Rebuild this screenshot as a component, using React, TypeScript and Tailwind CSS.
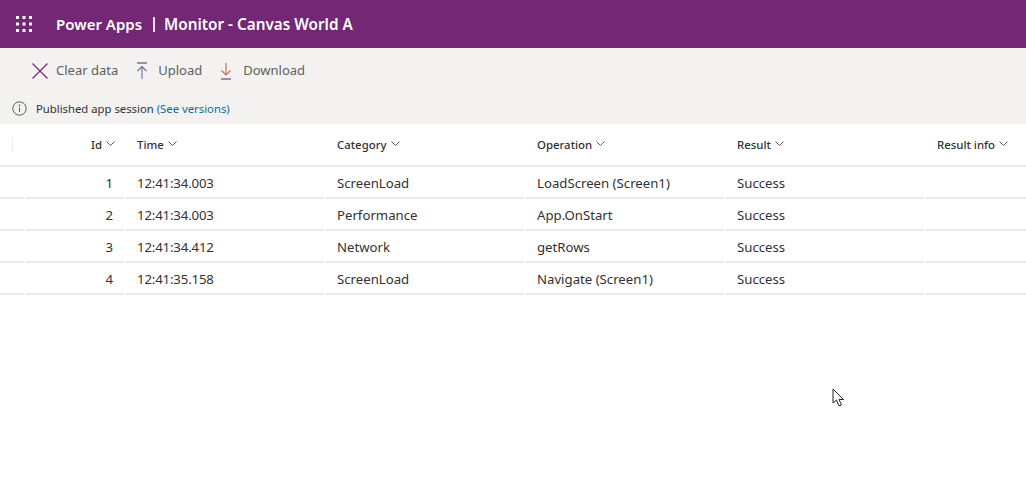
const FONT = "font-['Noto_Sans','Open_Sans',sans-serif]";

const COLUMNS = ['Time', 'Category', 'Operation', 'Result', 'Result info'];

const ROWS = [
  { id: 1, time: '12:41:34.003', category: 'ScreenLoad', operation: 'LoadScreen (Screen1)', result: 'Success' },
  { id: 2, time: '12:41:34.003', category: 'Performance', operation: 'App.OnStart', result: 'Success' },
  { id: 3, time: '12:41:34.412', category: 'Network', operation: 'getRows', result: 'Success' },
  { id: 4, time: '12:41:35.158', category: 'ScreenLoad', operation: 'Navigate (Screen1)', result: 'Success' },
];

function WaffleIcon() {
  const dots = [];
  for (let y = 0; y < 3; y++) {
    for (let x = 0; x < 3; x++) {
      dots.push(<rect key={`${x}-${y}`} x={x * 6.5} y={y * 6.5} width="3" height="3" fill="#fff" />);
    }
  }
  return (
    <svg width="16" height="16" viewBox="0 0 16 16">
      {dots}
    </svg>
  );
}

function ClearIcon() {
  return (
    <svg width="16" height="16" viewBox="0 0 16 16" fill="none" stroke="#742774" strokeWidth="1.2">
      <path d="M0.5 0.5 L15.5 15.5 M15.5 0.5 L0.5 15.5" />
    </svg>
  );
}

function UploadIcon() {
  return (
    <svg width="14" height="18" viewBox="0 0 14 18" fill="none" strokeWidth="1.1">
      <path d="M2 1 H12" stroke="#742774" />
      <path d="M7 17 V4.5 M2.5 9 L7 4.5 L11.5 9" stroke="#6f6fa8" />
    </svg>
  );
}

function DownloadIcon() {
  return (
    <svg width="14" height="18" viewBox="0 0 14 18" fill="none" strokeWidth="1.1">
      <path d="M7 1 V13 M2.5 8.5 L7 13 L11.5 8.5" stroke="#c0705a" />
      <path d="M2 17 H12" stroke="#742774" />
    </svg>
  );
}

function InfoIcon() {
  return (
    <svg width="15" height="15" viewBox="0 0 15 15" fill="none" stroke="#605e5c">
      <circle cx="7.5" cy="7.5" r="6.7" />
      <path d="M7.5 6.5 V11" />
      <circle cx="7.5" cy="4.3" r="0.5" fill="#605e5c" />
    </svg>
  );
}

function CursorIcon() {
  return (
    <svg width="13" height="20" viewBox="0 0 13 20" fill="#fff" stroke="#222" strokeWidth="1">
      <path d="M1 1 V15 L4.5 12 L7 18 L9.5 17 L7 11.5 H11.5 Z" />
    </svg>
  );
}

function Chevron() {
  return (
    <svg width="9" height="5" viewBox="0 0 9 5" fill="none" stroke="#605e5c" strokeWidth="1" className="mb-[2px]">
      <path d="M0.5 0.5 L4.5 4.5 L8.5 0.5" />
    </svg>
  );
}

function ToolbarButton({ icon, label, className }: { icon: React.ReactNode; label: string; className: string }) {
  return (
    <button type="button" className={`flex items-center text-[13px] text-[#605e5c] ${className}`}>
      {icon}
      {label}
    </button>
  );
}

function HeaderCell({ label, className }: { label: string; className?: string }) {
  return (
    <div className={`flex shrink-0 items-center gap-1 pt-px text-[11.4px] font-medium text-[#323130] ${className ?? ''}`}>
      {label}
      <Chevron />
    </div>
  );
}

const CELL = 'flex h-8 shrink-0 items-center border-b-2 border-[#edebe9] pt-1';

export default function App() {
  return (
    <div className={`relative h-[483px] w-[1026px] overflow-hidden bg-white ${FONT}`}>
      <header className="flex h-12 items-center bg-[#742774] pl-4 text-white">
        <WaffleIcon />
        <div className="ml-6 text-[15px] font-semibold">Power Apps</div>
        <div className="ml-[11px] mr-[9px] h-[15px] w-[2px] bg-[#f5dff0]" />
        <div className="text-[15.3px] font-semibold">Monitor - Canvas World A</div>
      </header>

      <div className="flex h-[45px] items-center gap-[17px] bg-[#f3f2f1] pl-8 shadow-[0_1px_2px_rgba(0,0,0,0.06)]">
        <ToolbarButton icon={<ClearIcon />} label="Clear data" className="gap-2" />
        <ToolbarButton icon={<UploadIcon />} label="Upload" className="gap-[9px]" />
        <ToolbarButton icon={<DownloadIcon />} label="Download" className="gap-[10px]" />
      </div>

      <div className="flex h-[31px] items-center gap-[9px] bg-[#f3f2f1] pl-3 text-[11.3px] text-[#323130]">
        <InfoIcon />
        <span className="pt-px">
          Published app session <span className="text-[#0f6ca0]">(See versions)</span>
        </span>
      </div>

      <div className="flex h-[43px] items-center border-b-2 border-[#edebe9]">
        <div className="ml-3 h-[14px] w-px shrink-0 bg-[#edebe9]" />
        <HeaderCell label="Id" className="ml-[78px] w-[46px]" />
        {COLUMNS.map((c) => (
          <HeaderCell key={c} label={c} className="w-[200px]" />
        ))}
      </div>

      {ROWS.map((r) => (
        <div key={r.id} className="flex gap-[2px] text-[13.2px] text-[#323130]">
          <div className={`${CELL} w-6`} />
          <div className={`${CELL} w-[98px] justify-end pr-[11px]`}>{r.id}</div>
          <div className={`${CELL} w-[198px] pl-[11px] tracking-[-0.15px]`}>{r.time}</div>
          <div className={`${CELL} w-[198px] pl-[11px]`}>{r.category}</div>
          <div className={`${CELL} w-[198px] pl-[11px]`}>{r.operation}</div>
          <div className={`${CELL} w-[198px] pl-[11px]`}>{r.result}</div>
          <div className={`${CELL} w-[100px]`} />
        </div>
      ))}

      <div className="absolute left-[832px] top-[388px]">
        <CursorIcon />
      </div>
    </div>
  );
}
